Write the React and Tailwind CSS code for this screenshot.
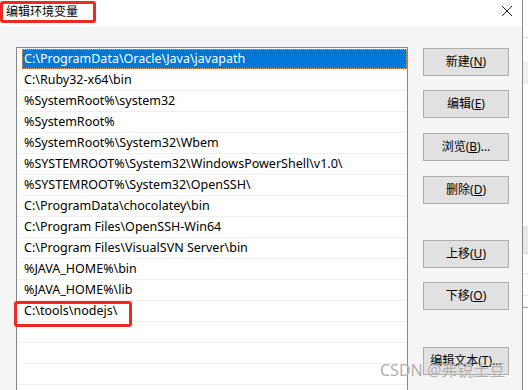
import React from "react";

const paths = [
  "C:\\ProgramData\\Oracle\\Java\\javapath",
  "C:\\Ruby32-x64\\bin",
  "%SystemRoot%\\system32",
  "%SystemRoot%",
  "%SystemRoot%\\System32\\Wbem",
  "%SYSTEMROOT%\\System32\\WindowsPowerShell\\v1.0\\",
  "%SYSTEMROOT%\\System32\\OpenSSH\\",
  "C:\\ProgramData\\chocolatey\\bin",
  "C:\\Program Files\\OpenSSH-Win64",
  "C:\\Program Files\\VisualSVN Server\\bin",
  "%JAVA_HOME%\\bin",
  "%JAVA_HOME%\\lib",
  "C:\\tools\\nodejs\\",
  "",
  "",
  "",
];

const buttons = [
  { label: "新建", key: "N", mt: "mt-0" },
  { label: "编辑", key: "E", mt: "mt-[14px]" },
  { label: "浏览", key: "B", tail: "...", mt: "mt-[15px]" },
  { label: "删除", key: "D", mt: "mt-[15px]" },
  { label: "上移", key: "U", mt: "mt-[36px]" },
  { label: "下移", key: "O", mt: "mt-[14px]" },
  { label: "编辑文本", key: "T", tail: "...", mt: "mt-[37px]" },
];

const font = { fontFamily: '"Noto Sans", "Noto Sans CJK SC", sans-serif' };

function Row({ text, index }) {
  const selected = index === 0;
  const marked = index === 12;
  return (
    <div className="relative h-[21px] border-b border-[#f0f0f0] text-[12.5px]">
      {selected ? (
        <div className="ml-[4px] h-[20px] bg-[#0078d7] border border-dotted border-[#e8a56a] pl-[1px] flex items-center text-white">
          {text}
        </div>
      ) : (
        <div className="h-[20px] pl-[6px] flex items-center text-black">{text}</div>
      )}
      {/* red annotation box */}
      {marked && (
        <div className="absolute left-[-4px] top-0 w-[118px] h-[26px] border-[3px] border-[#ee2a1e] rounded-[3px]" />
      )}
    </div>
  );
}

export default function App() {
  return (
    <div
      className="w-[528px] h-[390px] overflow-hidden flex bg-white text-[12px] leading-none"
      style={font}
    >
      {/* Dialog */}
      <div className="w-[523px] h-full flex flex-col border-r border-[#8a8a8a]">
        {/* Title bar */}
        <div className="h-[26px] bg-white flex items-start justify-between pt-[1px]">
          <div className="w-[96px] h-[22px] border-[3px] border-[#ee2a1e] rounded-[3px] pl-[3px] flex items-center text-black text-[12px]">
            编辑环境变量
          </div>
          <svg width="12" height="12" viewBox="0 0 12 12" className="mt-[4px] mr-[9px]">
            <path d="M1 1 L11 11 M11 1 L1 11" stroke="#222" strokeWidth="1" />
          </svg>
        </div>

        {/* Body */}
        <div className="flex-1 bg-[#f5f5f5] flex items-start pt-[21px] pl-[16px] overflow-hidden">
          <div className="w-[392px] h-[400px] bg-white border border-[#828790] pt-[1px] pl-[1px] shrink-0">
            {paths.map((p, i) => (
              <Row key={i} text={p} index={i} />
            ))}
          </div>

          <div className="ml-[15px] mt-[1px] flex flex-col w-[86px]">
            {buttons.map((b) => (
              <div
                key={b.key}
                className={`${b.mt} h-[28px] bg-[#e1e1e1] border border-[#adadad] flex items-center justify-center text-black`}
              >
                {b.label}(<span className="underline underline-offset-1">{b.key}</span>){b.tail}
              </div>
            ))}
          </div>
        </div>
      </div>

      {/* Window behind */}
      <div className="flex-1 h-full flex flex-col bg-white">
        <div className="h-[38px] border-b border-[#d6d6d6]" />
        <div className="mt-[24px] h-[22px] bg-[#f0f0f0]" />
        <div className="mt-[126px] h-[17px] border-b border-[#e5e5e5]" />
        <div className="h-[27px] bg-[#e8e8e8] border-b border-[#d9d9d9]" />
        <div className="h-[20px] border-b border-[#e5e5e5]" />
        <div className="h-[22px] border-b border-[#e5e5e5]" />
        <div className="h-[12px] border-b border-[#9a9a9a]" />
      </div>

      {/* Watermark */}
      <div className="absolute left-[380px] top-[362px] text-[16px] text-[#a8a8a8] opacity-90 whitespace-nowrap [text-shadow:0_0_1px_#ffffff]">
        CSDN @弗锐土豆
      </div>
    </div>
  );
}
